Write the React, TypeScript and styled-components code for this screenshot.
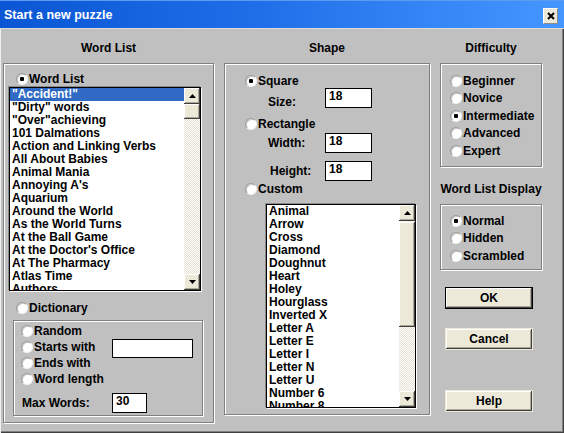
import React from "react";
import styled, { createGlobalStyle } from "styled-components";

const FONT = `"Liberation Sans", Arial, sans-serif`;

const GlobalStyle = createGlobalStyle`
  html, body {
    margin: 0;
    padding: 0;
    background: #c0c0c0;
  }
  body {
    font-family: ${FONT};
    font-weight: bold;
    font-size: 12px;
    color: #000;
  }
  * {
    box-sizing: border-box;
  }
`;

const WORD_LISTS = [
  `"Accident!"`,
  `"Dirty" words`,
  `"Over"achieving`,
  "101 Dalmations",
  "Action and Linking Verbs",
  "All About Babies",
  "Animal Mania",
  "Annoying A's",
  "Aquarium",
  "Around the World",
  "As the World Turns",
  "At the Ball Game",
  "At the Doctor's Office",
  "At The Pharmacy",
  "Atlas Time",
  "Authors",
];

const SHAPES = [
  "Animal",
  "Arrow",
  "Cross",
  "Diamond",
  "Doughnut",
  "Heart",
  "Holey",
  "Hourglass",
  "Inverted X",
  "Letter A",
  "Letter E",
  "Letter I",
  "Letter N",
  "Letter U",
  "Number 6",
  "Number 8",
];

const Choice = ({ label, checked, h = 16, mt = 0, ml = 0, w }: {
  label: string; checked?: boolean; h?: number; mt?: number; ml?: number; w?: number;
}) => (
  <S.RadioRow $h={h} $mt={mt} $ml={ml} $w={w}>
    <S.Radio $checked={checked} />
    <span>{label}</span>
  </S.RadioRow>
);

const ScrollArrow = ({ down }: { down?: boolean }) => (
  <svg width="7" height="4" viewBox="0 0 7 4">
    <path d={down ? "M0 0h7L3.5 4z" : "M0 4h7L3.5 0z"} fill="#000" />
  </svg>
);

const ListBox = ({ items, selected, w, h, thumb, thumbTop, mt = 0, ml = 0 }: {
  items: string[]; selected?: number; w: number; h: number; thumb: number; thumbTop: number; mt?: number; ml?: number;
}) => (
  <S.ListBox $w={w} $h={h} $mt={mt} $ml={ml}>
    <S.Items>
      {items.map((it, i) => (
        <S.Item key={it} $selected={i === selected}>{it}</S.Item>
      ))}
    </S.Items>
    <S.Scrollbar>
      <S.ScrollButton><ScrollArrow /></S.ScrollButton>
      <S.Track $h={thumbTop} />
      <S.Thumb $h={thumb} />
      <S.Track $grow />
      <S.ScrollButton><ScrollArrow down /></S.ScrollButton>
    </S.Scrollbar>
  </S.ListBox>
);

export default function App() {
  return (
    <>
      <GlobalStyle />
      <S.Window>
        <S.TitleBar>
          <S.Title>Start a new puzzle</S.Title>
          <S.CloseButton>
            <svg width="8" height="8" viewBox="0 0 8 8">
              <path d="M1 1l6 6M7 1l-6 6" stroke="#000" strokeWidth="2" />
            </svg>
          </S.CloseButton>
        </S.TitleBar>

        <S.Body>
          {/* word list column */}
          <S.Column>
            <S.Header>Word List</S.Header>
            <S.GroupBox $h={360} $pt={8} $pl={5}>
              <Choice label="Word List" checked h={14} ml={7} />
              <ListBox items={WORD_LISTS} selected={0} w={192} h={204} mt={1} thumb={15} thumbTop={0} />
              <Choice label="Dictionary" h={14} mt={10} ml={7} />
              <S.GroupBox $h={96} $w={190} $pt={2} $pl={7} $mt={5} $ml={4}>
                <Choice label="Random" />
                <S.FieldRow $h={16}>
                  <Choice label="Starts with" w={91} />
                  <S.TextBox $w={81} $h={19} $shift={3} />
                </S.FieldRow>
                <Choice label="Ends with" />
                <Choice label="Word length" />
                <S.FieldRow $h={20} $mt={6}>
                  <S.FieldLabel $w={90} $ml={1}>Max Words:</S.FieldLabel>
                  <S.TextBox $w={35} $h={20}>30</S.TextBox>
                </S.FieldRow>
              </S.GroupBox>
            </S.GroupBox>
          </S.Column>

          {/* shape column */}
          <S.Column>
            <S.Header>Shape</S.Header>
            <S.GroupBox $h={352} $pt={9} $pl={20}>
              <Choice label="Square" checked />
              <S.FieldRow $h={20} $mt={-1}>
                <S.FieldLabel $w={57} $ml={23} $drop={4}>Size:</S.FieldLabel>
                <S.TextBox $w={47} $h={20}>18</S.TextBox>
              </S.FieldRow>
              <Choice label="Rectangle" mt={8} />
              <S.FieldRow $h={20} $mt={1}>
                <S.FieldLabel $w={57} $ml={23}>Width:</S.FieldLabel>
                <S.TextBox $w={47} $h={20}>18</S.TextBox>
              </S.FieldRow>
              <S.FieldRow $h={20} $mt={8}>
                <S.FieldLabel $w={55} $ml={25}>Height:</S.FieldLabel>
                <S.TextBox $w={47} $h={20}>18</S.TextBox>
              </S.FieldRow>
              <Choice label="Custom" />
              <ListBox items={SHAPES} w={150} h={204} mt={7} ml={21} thumb={105} thumbTop={1} />
            </S.GroupBox>
          </S.Column>

          {/* difficulty column */}
          <S.Column>
            <S.Header>Difficulty</S.Header>
            <S.GroupBox $h={104} $pt={8} $pl={9}>
              <Choice label="Beginner" h={17.5} />
              <Choice label="Novice" h={17.5} />
              <Choice label="Intermediate" checked h={17.5} />
              <Choice label="Advanced" h={17.5} />
              <Choice label="Expert" h={17.5} />
            </S.GroupBox>
            <S.Header $mt={15}>Word List Display</S.Header>
            <S.GroupBox $h={66} $pt={7} $pl={9}>
              <Choice label="Normal" checked h={17.5} />
              <Choice label="Hidden" h={17.5} />
              <Choice label="Scrambled" h={17.5} />
            </S.GroupBox>
            <S.Button $mt={17} $default>OK</S.Button>
            <S.Button $mt={19}>Cancel</S.Button>
            <S.Button $mt={40}>Help</S.Button>
          </S.Column>
        </S.Body>
      </S.Window>
    </>
  );
}

const bevel = `
  box-shadow: inset -1px -1px #404040, inset 1px 1px #fff, inset -2px -2px #aca899;
`;

const S = {
  Window: styled.div`
    width: 564px;
    height: 433px;
    background: #c0c0c0;
    display: flex;
    flex-direction: column;
    overflow: hidden;
    box-shadow: inset 1px 0 #f0f0f0, inset -1px -1px #404040, inset -2px -2px #808080;
  `,
  TitleBar: styled.div`
    height: 29px;
    flex: none;
    display: flex;
    align-items: center;
    justify-content: space-between;
    padding: 0 6px 0 4px;
    background: linear-gradient(90deg, #0a56d4 0%, #1f6ee8 45%, #3b8cfa 85%, #4596ff 100%);
    border-top: 1px solid #5d9af0;
    border-bottom: 1px solid #dcdcdc;
  `,
  Title: styled.div`
    color: #fff;
    font-size: 12.5px;
    font-weight: bold;
    padding-top: 1px;
  `,
  CloseButton: styled.div`
    width: 15px;
    height: 16px;
    margin-top: 2px;
    background: #ece9d8;
    border: 1px solid #fff;
    border-right-color: #8c8c8c;
    border-bottom-color: #8c8c8c;
    display: flex;
    align-items: center;
    justify-content: center;
  `,
  Body: styled.div`
    flex: 1;
    display: grid;
    grid-template-columns: 211px 206px 102px;
    column-gap: 10px;
    align-items: start;
    padding-left: 3px;
  `,
  Column: styled.div`
    display: flex;
    flex-direction: column;
  `,
  Header: styled.div<{ $mt?: number }>`
    height: 14px;
    line-height: 14px;
    text-align: center;
    margin: ${({ $mt = 12 }) => $mt}px 0 8px;
    white-space: nowrap;
  `,
  GroupBox: styled.div<{ $h: number; $w?: number; $pt: number; $pl: number; $mt?: number; $ml?: number }>`
    height: ${({ $h }) => $h}px;
    width: ${({ $w }) => ($w ? `${$w}px` : "auto")};
    flex: none;
    margin-top: ${({ $mt = 0 }) => $mt}px;
    margin-left: ${({ $ml = 0 }) => $ml}px;
    padding-top: ${({ $pt }) => $pt}px;
    padding-left: ${({ $pl }) => $pl}px;
    border: 1px solid #808080;
    box-shadow: inset 1px 1px #fff, 1px 1px #fff;
    display: flex;
    flex-direction: column;
  `,
  RadioRow: styled.div<{ $h: number; $mt: number; $ml: number; $w?: number }>`
    height: ${({ $h }) => $h}px;
    margin-top: ${({ $mt }) => $mt}px;
    margin-left: ${({ $ml }) => $ml}px;
    width: ${({ $w }) => ($w ? `${$w}px` : "auto")};
    flex: none;
    display: flex;
    align-items: center;
    gap: 1px;
    white-space: nowrap;
  `,
  Radio: styled.span<{ $checked?: boolean }>`
    width: 12px;
    height: 12px;
    flex: none;
    border-radius: 50%;
    background: ${({ $checked }) =>
      $checked ? "radial-gradient(circle, #000 0 2px, #fff 2.5px)" : "#fff"};
    border: 1px solid;
    border-color: #9a9a9a #f4f4f4 #f4f4f4 #9a9a9a;
    box-shadow: inset 1px 1px #c8c8c8;
  `,
  FieldRow: styled.div<{ $h: number; $mt?: number }>`
    height: ${({ $h }) => $h}px;
    margin-top: ${({ $mt = 0 }) => $mt}px;
    flex: none;
    display: flex;
    align-items: center;
  `,
  FieldLabel: styled.div<{ $w: number; $ml?: number; $drop?: number }>`
    width: ${({ $w }) => $w}px;
    margin-left: ${({ $ml = 0 }) => $ml}px;
    padding-top: ${({ $drop = 0 }) => $drop * 2}px;
    flex: none;
    white-space: nowrap;
  `,
  TextBox: styled.div<{ $w: number; $h: number; $shift?: number }>`
    width: ${({ $w }) => $w}px;
    height: ${({ $h }) => $h}px;
    margin-top: ${({ $shift = 0 }) => $shift}px;
    flex: none;
    background: #fff;
    border: 1px solid #000;
    padding: 1px 0 0 3px;
    line-height: 12px;
  `,
  ListBox: styled.div<{ $w: number; $h: number; $mt: number; $ml: number }>`
    width: ${({ $w }) => $w}px;
    height: ${({ $h }) => $h}px;
    margin-top: ${({ $mt }) => $mt}px;
    margin-left: ${({ $ml }) => $ml}px;
    flex: none;
    display: flex;
    background: #fff;
    border: 1px solid #000;
    box-shadow: -1px -1px 0 #8a8a8a, 1px 1px 0 #fff;
    overflow: hidden;
  `,
  Items: styled.div`
    flex: 1;
    overflow: hidden;
  `,
  Item: styled.div<{ $selected?: boolean }>`
    height: 13px;
    line-height: 13px;
    padding-left: 2px;
    white-space: nowrap;
    background: ${({ $selected }) => ($selected ? "#316ac5" : "transparent")};
    color: ${({ $selected }) => ($selected ? "#fff" : "#000")};
  `,
  Scrollbar: styled.div`
    width: 16px;
    flex: none;
    display: flex;
    flex-direction: column;
    background-color: #fff;
    background-image: repeating-conic-gradient(#e4e1d0 0 25%, #fff 0 50%);
    background-size: 2px 2px;
  `,
  ScrollButton: styled.div`
    height: 16px;
    flex: none;
    background: #ece9d8;
    ${bevel}
    display: flex;
    align-items: center;
    justify-content: center;
  `,
  Thumb: styled.div<{ $h: number }>`
    height: ${({ $h }) => $h}px;
    flex: none;
    background: #ece9d8;
    ${bevel}
  `,
  Track: styled.div<{ $h?: number; $grow?: boolean }>`
    height: ${({ $h = 0 }) => $h}px;
    flex: ${({ $grow }) => ($grow ? 1 : "none")};
  `,
  Button: styled.div<{ $mt: number; $default?: boolean }>`
    width: 88px;
    height: 22px;
    margin: ${({ $mt }) => $mt}px 0 0 5px;
    flex: none;
    display: flex;
    align-items: center;
    justify-content: center;
    background: #ece9d8;
    border: 1px solid ${({ $default }) => ($default ? "#000" : "transparent")};
    box-shadow: inset -1px -1px #404040, inset 1px 1px #fff, inset -2px -2px #aca899;
    user-select: none;
  `,
};
